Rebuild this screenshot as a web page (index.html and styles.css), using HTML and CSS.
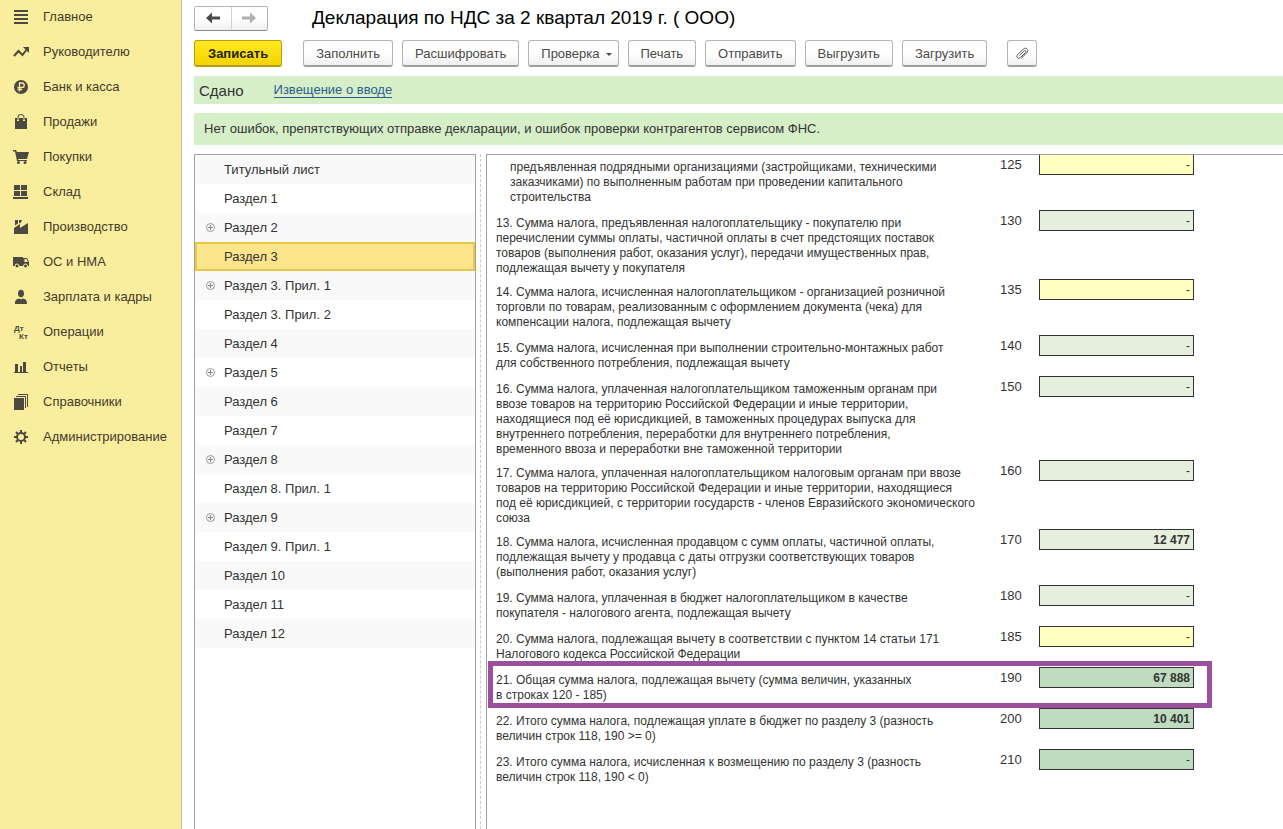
FILE: index.html
```html
<!DOCTYPE html>
<html lang="ru">
<head>
  <meta charset="UTF-8">
  <title>Декларация по НДС</title>
  <meta name="viewport" content="width=device-width, initial-scale=1.0">
  <link rel="stylesheet" href="styles.css">
</head>
<body>
  <nav class="sidebar">
    <a href="#"><svg viewBox="0 0 16 16"><path d="M1 1h14v2H1zM1 5h14v2H1zM1 9h14v2H1zM1 13h14v2H1z"/></svg>Главное</a>
    <a href="#"><svg viewBox="0 0 16 16"><path d="M1 12l4.500-5 4 4L14 5" fill="none" stroke="#4c4a40" stroke-width="2"/><path d="M10 3h6v6z"/></svg>Руководителю</a>
    <a href="#"><svg viewBox="0 0 16 16"><circle cx="8" cy="8" r="7"/><path d="M6.500 12.500V4h2.500a2.200 2.200 0 0 1 0 4.500H4.500M4.500 10.500H9" fill="none" stroke="#fbed9e" stroke-width="1.300"/></svg>Банк и касса</a>
    <a href="#"><svg viewBox="0 0 16 16"><path d="M2 4h2v3h2V4h4v3h2V4h2v11H2z"/><path d="M5 6V3a3 2.500 0 0 1 6 0V6" fill="none" stroke="#4c4a40"/></svg>Продажи</a>
    <a href="#"><svg viewBox="0 0 16 16"><path d="M0 1h3l1 2h12l-2 7H5l.5 1H14v1H4L2 2.500H0z"/><circle cx="5.500" cy="13.500" r="1.500"/><circle cx="12" cy="13.500" r="1.500"/></svg>Покупки</a>
    <a href="#"><svg viewBox="0 0 16 16"><path d="M1 1h6v5H1zM8 1h6v5H8zM1 7h6v5H1zM8 7h6v5H8zM0 13h15v2H0z"/></svg>Склад</a>
    <a href="#"><svg viewBox="0 0 16 16"><path d="M1 15V9l6-4v4l8-5v11zM2 1h3v3.500L2 6.500zM6 1h3L8 3.500 6 4.500z"/></svg>Производство</a>
    <a href="#"><svg viewBox="0 0 16 16"><path d="M0 3h10v9H0zM10 4h4l2 4v4h-6z"/><path d="M11.500 5h2l1.300 3h-3.300z" fill="#fbed9e"/><circle cx="4" cy="12" r="2" stroke="#fbed9e"/><circle cx="12.500" cy="12" r="2" stroke="#fbed9e"/></svg>ОС и НМА</a>
    <a href="#"><svg viewBox="0 0 16 16"><ellipse cx="8" cy="4.500" rx="3" ry="3.800"/><path d="M2 15c0-4 1-5 4.500-5.500L8 10.500l1.500-1C13 10 14 11 14 15z"/></svg>Зарплата и кадры</a>
    <a href="#"><svg viewBox="0 0 16 16"><text x="1" y="7">Дт</text><text x="6" y="15">Кт</text></svg>Операции</a>
    <a href="#"><svg viewBox="0 0 16 16"><path d="M1 13h14v1H1zM2 5h3v8H2zM7 7h2v6H7zM10 3h3v10h-3z"/></svg>Отчеты</a>
    <a href="#"><svg viewBox="0 0 16 16"><path d="M1 4h10v12H1z"/><path d="M3 2.500h9.500V14M5 .5h9.500V13" fill="none" stroke="#4c4a40"/></svg>Справочники</a>
    <a href="#"><svg viewBox="0 0 16 16"><circle cx="8" cy="8" r="4" fill="none" stroke="#4c4a40" stroke-width="2"/><path d="M8 1v3M8 12v3M1 8h3M12 8h3M3 3l2 2M11 11l2 2M3 13l2-2M11 5l2-2" fill="none" stroke="#4c4a40" stroke-width="2"/></svg>Администрирование</a>
  </nav>

  <main class="content">
    <header class="header">
      <div class="history">
        <button type="button" aria-label="Назад"><svg viewBox="0 0 16 12"><path d="M1 6l6-5.500v4h8v3H7v4z"/></svg></button>
        <button type="button" aria-label="Вперед" disabled><svg viewBox="0 0 16 12"><path d="M15 6L9 .5v4H1v3h8v4z"/></svg></button>
      </div>
      <h1>Декларация по НДС за 2 квартал 2019 г. ( ООО)</h1>
    </header>

    <div class="toolbar">
      <button type="button" class="btn primary">Записать</button>
      <button type="button" class="btn">Заполнить</button>
      <button type="button" class="btn">Расшифровать</button>
      <button type="button" class="btn dropdown">Проверка</button>
      <button type="button" class="btn">Печать</button>
      <button type="button" class="btn">Отправить</button>
      <button type="button" class="btn">Выгрузить</button>
      <button type="button" class="btn">Загрузить</button>
      <button type="button" class="btn attach" aria-label="Файлы"><svg viewBox="0 0 16 16"><path d="M5.500 10.500l4.500-4.500c1.300-1.300 2.800.2 1.500 1.500l-5 5c-2.300 2.200-5-.5-2.800-2.800l5.500-5.500c2.800-2.700 6.300.8 3.600 3.600l-5.300 5.200"/></svg></button>
    </div>

    <div class="status">
      <span>Сдано</span>
      <a href="#">Извещение о вводе</a>
    </div>
    <div class="message">Нет ошибок, препятствующих отправке декларации, и ошибок проверки контрагентов сервисом ФНС.</div>

    <div class="panels">
      <ul class="tree">
        <li>Титульный лист</li>
        <li>Раздел 1</li>
        <li class="closed">Раздел 2</li>
        <li class="selected">Раздел 3</li>
        <li class="closed">Раздел 3. Прил. 1</li>
        <li>Раздел 3. Прил. 2</li>
        <li>Раздел 4</li>
        <li class="closed">Раздел 5</li>
        <li>Раздел 6</li>
        <li>Раздел 7</li>
        <li class="closed">Раздел 8</li>
        <li>Раздел 8. Прил. 1</li>
        <li class="closed">Раздел 9</li>
        <li>Раздел 9. Прил. 1</li>
        <li>Раздел 10</li>
        <li>Раздел 11</li>
        <li>Раздел 12</li>
      </ul>

      <div class="splitter"></div>

      <div class="sheet">
        <table>
          <colgroup>
            <col class="col-name">
            <col class="col-code">
            <col class="col-sum">
          </colgroup>
          <tbody>
            <tr class="lines-3">
              <td class="sub"><label for="r125">предъявленная подрядными организациями (застройщиками, техническими<br>заказчиками) по выполненным работам при проведении капитального<br>строительства</label></td>
              <td>125</td>
              <td><input type="text" id="r125" class="edit" value="-"></td>
            </tr>
            <tr class="lines-4">
              <td><label for="r130">13. Сумма налога, предъявленная налогоплательщику - покупателю при<br>перечислении суммы оплаты, частичной оплаты в счет предстоящих поставок<br>товаров (выполнения работ, оказания услуг), передачи имущественных прав,<br>подлежащая вычету у покупателя</label></td>
              <td>130</td>
              <td><input type="text" id="r130" value="-"></td>
            </tr>
            <tr class="lines-3">
              <td><label for="r135">14. Сумма налога, исчисленная налогоплательщиком - организацией розничной<br>торговли по товарам, реализованным с оформлением документа (чека) для<br>компенсации налога, подлежащая вычету</label></td>
              <td>135</td>
              <td><input type="text" id="r135" class="edit" value="-"></td>
            </tr>
            <tr class="lines-2">
              <td><label for="r140">15. Сумма налога, исчисленная при выполнении строительно-монтажных работ<br>для собственного потребления, подлежащая вычету</label></td>
              <td>140</td>
              <td><input type="text" id="r140" value="-"></td>
            </tr>
            <tr class="lines-5">
              <td><label for="r150">16. Сумма налога, уплаченная налогоплательщиком таможенным органам при<br>ввозе товаров на территорию Российской Федерации и иные территории,<br>находящиеся под её юрисдикцией, в таможенных процедурах выпуска для<br>внутреннего потребления, переработки для внутреннего потребления,<br>временного ввоза и переработки вне таможенной территории</label></td>
              <td>150</td>
              <td><input type="text" id="r150" value="-"></td>
            </tr>
            <tr class="lines-4">
              <td><label for="r160">17. Сумма налога, уплаченная налогоплательщиком налоговым органам при ввозе<br>товаров на территорию Российской Федерации и иные территории, находящиеся<br>под её юрисдикцией, с территории государств - членов Евразийского экономического<br>союза</label></td>
              <td>160</td>
              <td><input type="text" id="r160" value="-"></td>
            </tr>
            <tr class="lines-3">
              <td><label for="r170">18. Сумма налога, исчисленная продавцом с сумм оплаты, частичной оплаты,<br>подлежащая вычету у продавца с даты отгрузки соответствующих товаров<br>(выполнения работ, оказания услуг)</label></td>
              <td>170</td>
              <td><input type="text" id="r170" class="filled" value="12 477"></td>
            </tr>
            <tr class="lines-2">
              <td><label for="r180">19. Сумма налога, уплаченная в бюджет налогоплательщиком в качестве<br>покупателя - налогового агента, подлежащая вычету</label></td>
              <td>180</td>
              <td><input type="text" id="r180" value="-"></td>
            </tr>
            <tr class="lines-2">
              <td><label for="r185">20. Сумма налога, подлежащая вычету в соответствии с пунктом 14 статьи 171<br>Налогового кодекса Российской Федерации</label></td>
              <td>185</td>
              <td><input type="text" id="r185" class="edit" value="-"></td>
            </tr>
            <tr class="lines-2 marked">
              <td><label for="r190">21. Общая сумма налога, подлежащая вычету (сумма величин, указанных<br>в строках 120 - 185)</label></td>
              <td>190</td>
              <td><input type="text" id="r190" class="total filled" value="67 888"></td>
            </tr>
            <tr class="lines-2">
              <td><label for="r200">22. Итого сумма налога, подлежащая уплате в бюджет по разделу 3 (разность<br>величин строк 118, 190 &gt;= 0)</label></td>
              <td>200</td>
              <td><input type="text" id="r200" class="total filled" value="10 401"></td>
            </tr>
            <tr class="lines-2">
              <td><label for="r210">23. Итого сумма налога, исчисленная к возмещению по разделу 3 (разность<br>величин строк 118, 190 &lt; 0)</label></td>
              <td>210</td>
              <td><input type="text" id="r210" class="total" value="-"></td>
            </tr>
          </tbody>
        </table>
      </div>
    </div>
  </main>
</body>
</html>
```
FILE: styles.css
```css
:root {
  --side: #fbed9e;
  --icon: #4c4a40;
  --green: #d6efc8;
  --border: #a0a0a0;
  --font: #333;
}

*,
*::before {
  box-sizing: border-box;
}

body {
  margin: 0;
  height: 100vh;
  display: flex;
  overflow: hidden;
  background: #fff;
  color: var(--font);
  font-family: "Liberation Sans", Arial, sans-serif;
  font-size: 13px;
}

button,
input {
  font-family: inherit;
  font-size: inherit;
  color: inherit;
}

/* меню разделов */
.sidebar {
  flex: none;
  width: 182px;
  display: flex;
  flex-direction: column;
  gap: 2px;
  background: var(--side);
  border-right: 1px solid #b9c48f;
}

.sidebar a {
  display: flex;
  align-items: center;
  gap: 14px;
  height: 33px;
  padding-left: 13px;
  color: #3f3c2b;
  text-decoration: none;
  white-space: nowrap;
}

.sidebar svg {
  flex: none;
  width: 16px;
  height: 16px;
  fill: var(--icon);
}

.sidebar text {
  font-size: 8px;
  font-weight: bold;
}

.content {
  flex: 1;
  min-width: 0;
  display: flex;
  flex-direction: column;
  padding-left: 12px;
}

.header {
  display: flex;
  align-items: center;
  gap: 44px;
  height: 36px;
}

.header h1 {
  margin: 0;
  color: #000;
  font-size: 19px;
  font-weight: normal;
  white-space: nowrap;
}

.history {
  display: flex;
  width: 74px;
  height: 25px;
  border: 1px solid #b4b4b4;
  border-bottom-color: #8c8c8c;
  border-radius: 2px;
  background: linear-gradient(#fff 50%, #f0f0f0);
}

.history button {
  flex: 1;
  padding: 0;
  border: none;
  background: none;
  line-height: 0;
}

.history button + button {
  border-left: 1px solid #d0d0d0;
}

.history svg {
  width: 16px;
  height: 12px;
  fill: #4a4a4a;
}

.history button:disabled svg {
  fill: #b0b0b0;
}

.toolbar {
  display: flex;
  gap: 9px;
  padding: 4px 0 9px;
}

.btn {
  height: 27px;
  padding: 0 12px;
  border: 1px solid #b4b4b4;
  border-bottom: 2px solid #a0a0a0;
  border-radius: 3px;
  background: linear-gradient(#fff 50%, #f0f0f0);
  color: #4a4a4a;
  white-space: nowrap;
}

.btn.primary {
  margin-right: 12px;
  padding: 0 13px;
  border-color: #b59f10;
  background: linear-gradient(#ffe81f, #f5d400);
  color: #222;
  font-weight: bold;
}

.btn.dropdown::after {
  content: "";
  display: inline-block;
  margin: 0 -6px 2px 6px;
  border: 3px solid transparent;
  border-top-color: #4a4a4a;
  border-bottom: none;
}

.btn.attach {
  width: 30px;
  margin-left: 11px;
  padding: 0;
  line-height: 0;
}

.attach svg {
  width: 16px;
  height: 16px;
  fill: none;
  stroke: #555;
}

.status {
  display: flex;
  align-items: center;
  gap: 30px;
  height: 28px;
  padding-left: 5px;
  background: var(--green);
}

.status span {
  font-size: 15px;
}

.status a {
  padding-top: 1px;
  border-bottom: 1px solid #2d5c8f;
  color: #2d5c8f;
  line-height: 14px;
  text-decoration: none;
}

.message {
  height: 32px;
  margin: 9px 0;
  padding-left: 10px;
  background: var(--green);
  line-height: 32px;
}

.panels {
  flex: 1;
  min-height: 0;
  display: flex;
}

.tree,
.sheet {
  border: 1px solid var(--border);
  border-bottom: none;
  overflow: hidden;
}

.tree {
  flex: none;
  width: 282px;
  margin: 0;
  padding: 0;
  list-style: none;
}

.tree li {
  display: flex;
  align-items: center;
  height: 29px;
  padding-left: 29px;
}

.tree li:nth-child(odd) {
  background: #f9f9f9;
}

.tree .closed {
  padding-left: 11px;
}

/* плюсик свернутого узла */
.tree .closed::before {
  content: "";
  width: 9px;
  height: 9px;
  margin-right: 9px;
  border: 1px solid #999;
  border-radius: 50%;
  background:
    linear-gradient(#888, #888) center / 5px 1px no-repeat,
    linear-gradient(#888, #888) center / 1px 5px no-repeat;
}

.tree .selected {
  padding-left: 27px;
  border: 2px solid #e8c84a;
  background: #fde58c;
}

.splitter {
  flex: none;
  width: 5px;
  margin-right: 5px;
  border-right: 1px dashed #ccc;
}

.sheet {
  flex: 1;
  min-width: 0;
  border-right: none;
}

.sheet table {
  width: 707px;
  margin-top: -1px;
  border-collapse: collapse;
  table-layout: fixed;
}

.col-name {
  width: 504px;
}

.col-code {
  width: 48px;
}

.col-sum {
  width: 155px;
}

.sheet td {
  padding: 0;
  vertical-align: top;
}

.sheet td:first-child {
  padding: 6px 0 0 9px;
  font-size: 12px;
  line-height: 15px;
  white-space: nowrap;
}

.sheet td.sub {
  padding-left: 23px;
}

.sheet td:nth-child(2) {
  padding-left: 9px;
  line-height: 21px;
}

.lines-2 { height: 41px; }
.lines-3 { height: 56px; }
.lines-4 { height: 69px; }
.lines-5 { height: 84px; }

.sheet label {
  display: block;
}

.sheet input {
  display: block;
  width: 100%;
  height: 21px;
  padding: 0 3px;
  border: 1px solid #333;
  border-radius: 0;
  background: #e6efdd;
  font-size: 12px;
  text-align: right;
}

.sheet input.edit {
  background: #ffffc0;
}

.sheet input.total {
  background: #bfdbc0;
}

.sheet input.filled {
  font-weight: bold;
}

.marked {
  position: relative;
}

/* рамка вокруг строки 190 */
.marked::after {
  content: "";
  position: absolute;
  top: -6px;
  right: -18px;
  bottom: 0;
  left: 1px;
  border: 5px solid #9b4f9d;
  pointer-events: none;
}
```
